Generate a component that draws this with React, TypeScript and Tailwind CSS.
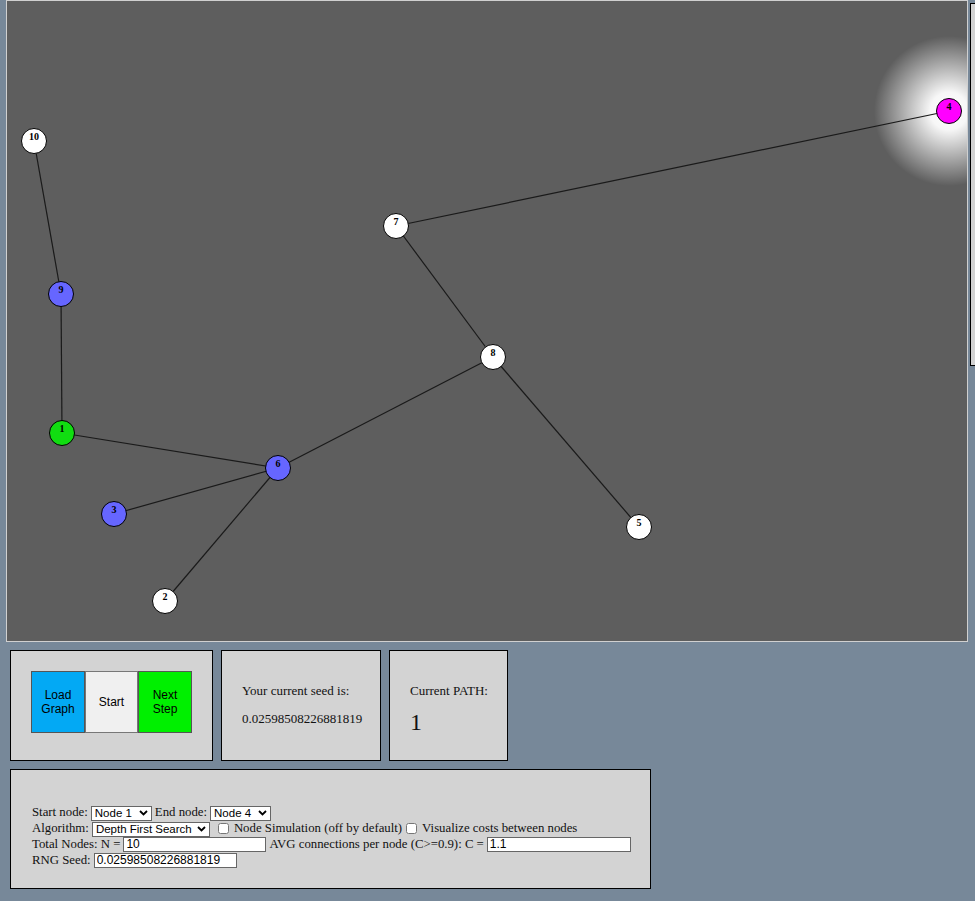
import React from "react";

type Node = { id: number; x: number; y: number; fill: string };

// page coords minus canvas origin (7,1)
const nodes: Node[] = [
  { id: 1, x: 55, y: 432, fill: "#11dd11" },
  { id: 2, x: 158, y: 600, fill: "#ffffff" },
  { id: 3, x: 107, y: 513, fill: "#6666ff" },
  { id: 4, x: 942, y: 110, fill: "#ff00ff" },
  { id: 5, x: 632, y: 526, fill: "#ffffff" },
  { id: 6, x: 271, y: 467, fill: "#6666ff" },
  { id: 7, x: 389, y: 225, fill: "#ffffff" },
  { id: 8, x: 486, y: 356, fill: "#ffffff" },
  { id: 9, x: 54, y: 293, fill: "#6666ff" },
  { id: 10, x: 27, y: 140, fill: "#ffffff" },
];

const edges: [number, number][] = [
  [10, 9],
  [9, 1],
  [1, 6],
  [6, 3],
  [6, 2],
  [6, 8],
  [8, 7],
  [8, 5],
  [7, 4],
];

const byId = (id: number) => nodes.find((n) => n.id === id)!;

const serif = { fontFamily: '"Liberation Serif", "Times New Roman", serif' };
const sans = { fontFamily: '"Liberation Sans", Arial, sans-serif' };

const Graph = () => (
  <svg width={960} height={640} className="block">
    <defs>
      <radialGradient id="glow">
        <stop offset="0%" stopColor="#ffffff" stopOpacity="1" />
        <stop offset="25%" stopColor="#ffffff" stopOpacity="0.95" />
        <stop offset="100%" stopColor="#ffffff" stopOpacity="0" />
      </radialGradient>
    </defs>
    <circle cx={942} cy={110} r={75} fill="url(#glow)" />
    {edges.map(([a, b]) => {
      const p = byId(a);
      const q = byId(b);
      return (
        <line
          key={`${a}-${b}`}
          x1={p.x}
          y1={p.y}
          x2={q.x}
          y2={q.y}
          stroke="#1a1a1a"
          strokeWidth={1.2}
        />
      );
    })}
    {nodes.map((n) => (
      <g key={n.id}>
        <circle cx={n.x} cy={n.y} r={12.5} fill={n.fill} stroke="#000" strokeWidth={1} />
        <text
          x={n.x}
          y={n.y - 1}
          textAnchor="middle"
          fontSize={10}
          fontWeight="bold"
          fill="#000"
          style={serif}
        >
          {n.id}
        </text>
      </g>
    ))}
  </svg>
);

const Select = ({ label, w }: { label: string; w: string }) => (
  <div className={`relative h-[15px] ${w}`} style={sans}>
    <select className="h-[15px] w-full appearance-none border border-[#666] bg-white py-0 pl-[3px] pr-[14px] text-[11.5px] leading-[13px] text-black outline-none">
      <option>{label}</option>
    </select>
    {/* chevron */}
    <svg
      className="pointer-events-none absolute right-[4px] top-[5px]"
      width="9"
      height="6"
      viewBox="0 0 9 6"
    >
      <path d="M1 1 L4.5 4.5 L8 1" fill="none" stroke="#000" strokeWidth="1.8" />
    </svg>
  </div>
);

const TextInput = ({ value, w }: { value: string; w: string }) => (
  <input
    defaultValue={value}
    className={`h-[15px] ${w} border border-[#666] bg-white px-[2px] text-[12px] leading-[13px] text-black outline-none`}
    style={sans}
  />
);

export default function App() {
  return (
    <div className="w-[975px] h-[901px] overflow-hidden bg-[#778899]" style={serif}>
      {/* top: canvas + side panel */}
      <div className="flex items-start">
        <div className="ml-[6px] border border-[#d0d0d0] bg-[#5e5e5e] shrink-0">
          <Graph />
        </div>
        <div className="ml-[2px] mt-[3px] h-[363px] w-[200px] shrink-0 border border-black bg-[#d3d3d3]" />
      </div>

      {/* controls */}
      <div className="ml-[10px] mt-[8px] flex gap-2">
        <div className="h-[111px] w-[203px] border border-black bg-[#d3d3d3] pl-[20px] pt-[20px]">
          <div className="flex text-[12px] leading-[14px] text-black" style={sans}>
            <button className="flex h-[62px] w-[54px] items-center justify-center border border-[#555] bg-[#03a9f4] text-center">
              Load
              <br />
              Graph
            </button>
            <button className="flex h-[62px] w-[53px] items-center justify-center border border-[#777] bg-[#f0f0f0]">
              Start
            </button>
            <button className="flex h-[62px] w-[54px] items-center justify-center border border-[#555] bg-[#00f000] text-center">
              Next
              <br />
              Step
            </button>
          </div>
        </div>
        <div className="h-[111px] w-[160px] border border-black bg-[#d3d3d3] pl-[20px] pt-[32px] text-[13px] text-[#111]">
          <p className="leading-[16px]">Your current seed is:</p>
          <p className="mt-[12px] leading-[16px]">0.02598508226881819</p>
        </div>
        <div className="h-[111px] w-[119px] border border-black bg-[#d3d3d3] pl-[20px] pt-[32px] text-[13px] text-[#111]">
          <p className="leading-[16px]">Current PATH:</p>
          <p className="mt-[9px] text-[24px] leading-[28px]">1</p>
        </div>
      </div>

      {/* settings */}
      <div className="ml-[10px] mt-[8px] h-[120px] w-[641px] border border-black bg-[#d3d3d3] pl-[21px] pt-[34px] text-[12.8px] leading-[16px] text-[#111]">
        <div className="flex items-center gap-[3px]">
          <span>Start node:</span>
          <Select label="Node 1" w="w-[61px]" />
          <span>End node:</span>
          <Select label="Node 4" w="w-[61px]" />
        </div>
        <div className="flex items-center gap-[3px]">
          <span>Algorithm:</span>
          <Select label="Depth First Search" w="w-[118px]" />
          <input type="checkbox" className="ml-[5px] mr-[2px] h-[11px] w-[11px]" />
          <span>Node Simulation (off by default)</span>
          <input type="checkbox" className="ml-[1px] mr-[2px] h-[11px] w-[11px]" />
          <span>Visualize costs between nodes</span>
        </div>
        <div className="flex items-center gap-[3px]">
          <span>Total Nodes: N =</span>
          <TextInput value="10" w="w-[143px]" />
          <span>AVG connections per node (C&gt;=0.9): C =</span>
          <TextInput value="1.1" w="w-[144px]" />
        </div>
        <div className="flex items-center gap-[3px]">
          <span>RNG Seed:</span>
          <TextInput value="0.02598508226881819" w="w-[143px]" />
        </div>
      </div>
    </div>
  );
}
